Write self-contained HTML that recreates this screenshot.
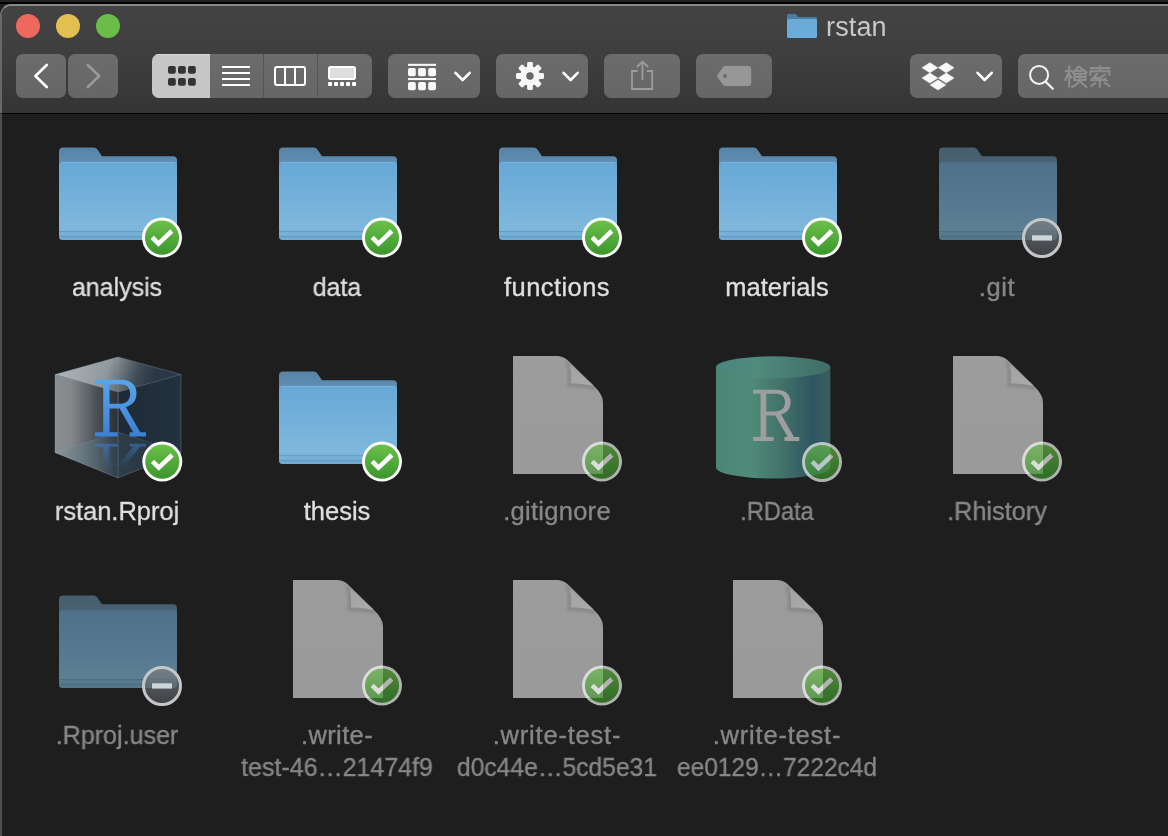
<!DOCTYPE html>
<html><head><meta charset="utf-8">
<style>
html,body{margin:0;padding:0;width:1168px;height:836px;overflow:hidden;background:#1e1e1e;font-family:"Liberation Sans",sans-serif;}
.abs{position:absolute;}
#topdark{left:0;top:0;width:1168px;height:2px;background:#232323;}
#topblack{left:0;top:2px;width:1168px;height:2px;background:#000;}
#win{left:0;top:4px;width:1180px;height:900px;border-top:2px solid #878787;border-left:2px solid #686868;border-top-left-radius:11px;overflow:hidden;background:#1e1e1e;}
#toolbar{left:0;top:0;width:1180px;height:107px;background:linear-gradient(#434343,#3e3e3e 50%,#343434);}
#tbhl{display:none;}
#tbline{left:0;top:107px;width:1180px;height:1px;background:#000;}
#lborder{left:0;top:114px;width:2px;height:722px;background:#4e4e4e;}
.light{width:24px;height:24px;border-radius:50%;top:8px;}
.btn{background:linear-gradient(#6c6c6c,#666666);border-radius:7px;height:44px;top:50px;}
.lbl{position:absolute;will-change:transform;-webkit-text-stroke:0.35px currentColor;width:220px;text-align:center;font-size:25.5px;line-height:32px;color:#dfdfdf;white-space:nowrap;}
.dim{color:#878787;}
</style></head><body>
<div class="abs" id="topdark"></div>
<div class="abs" id="topblack"></div>
<div class="abs" id="win">
  <div class="abs" id="toolbar"></div>
  <div class="abs" id="tbhl"></div>
  <div class="abs" id="tbline"></div>
  <div class="abs light" style="left:14px;background:#ee685d;"></div>
  <div class="abs light" style="left:54px;background:#e2bf4e;"></div>
  <div class="abs light" style="left:94px;background:#69bd48;"></div>
</div>

<div class="abs" id="lborder"></div>
<div class="abs" style="left:0;top:113px;width:2px;height:1px;background:#2a2a2a;"></div>
<!-- toolbar buttons (absolute page coords) -->
<div class="abs btn" style="left:16px;top:54px;width:50px;"></div>
<div class="abs btn" style="left:68px;top:54px;width:50px;"></div>
<svg class="abs" style="left:0;top:0" width="1168" height="120">
  <path d="M46.8 65 L35.4 76 L46.8 87" fill="none" stroke="#fff" stroke-width="2.6" stroke-linecap="round" stroke-linejoin="round"/>
  <path d="M87.8 65 L99.2 76 L87.8 87" fill="none" stroke="#9a9a9a" stroke-width="2.6" stroke-linecap="round" stroke-linejoin="round"/>
</svg>

<!-- segmented view control -->
<div class="abs" style="left:152px;top:54px;width:220px;height:44px;border-radius:7px;overflow:hidden;background:linear-gradient(#6c6c6c,#666);">
  <div class="abs" style="left:0;top:0;width:58px;height:44px;background:#c6c6c6;border-top:1px solid #d8d8d8;box-sizing:border-box;"></div>
  <div class="abs" style="left:111px;top:0;width:1px;height:44px;background:#555;"></div>
  <div class="abs" style="left:165px;top:0;width:1px;height:44px;background:#555;"></div>
</div>
<svg class="abs" style="left:0;top:0" width="1168" height="120">
  <!-- icon grid -->
  <g fill="#333">
    <rect x="168" y="66.1" width="7.8" height="7.7" rx="2"/><rect x="178" y="66.1" width="7.8" height="7.7" rx="2"/><rect x="188" y="66.1" width="7.8" height="7.7" rx="2"/>
    <rect x="168" y="78.1" width="7.8" height="7.7" rx="2"/><rect x="178" y="78.1" width="7.8" height="7.7" rx="2"/><rect x="188" y="78.1" width="7.8" height="7.7" rx="2"/>
  </g>
  <!-- list -->
  <g fill="#fff">
    <rect x="222" y="66" width="28" height="2"/><rect x="222" y="72" width="28" height="2"/><rect x="222" y="78" width="28" height="2"/><rect x="222" y="84" width="28" height="2"/>
  </g>
  <!-- columns -->
  <rect x="275" y="67" width="30" height="18" rx="2" fill="none" stroke="#fff" stroke-width="2"/>
  <rect x="284" y="67" width="2" height="18" fill="#fff"/><rect x="294" y="67" width="2" height="18" fill="#fff"/>
  <!-- gallery -->
  <rect x="329" y="67" width="26" height="12" rx="1.8" fill="#dedede" stroke="#fff" stroke-width="2"/>
  <g fill="#fff"><rect x="328.1" y="82" width="3.9" height="4" rx="0.8"/><rect x="334.1" y="82" width="3.9" height="4" rx="0.8"/><rect x="340.1" y="82" width="3.9" height="4" rx="0.8"/><rect x="346.1" y="82" width="3.9" height="4" rx="0.8"/><rect x="352.1" y="82" width="3.9" height="4" rx="0.8"/></g>
</svg>

<!-- group, action, share, tag, dropbox buttons -->
<div class="abs btn" style="left:388px;top:54px;width:92px;"></div>
<div class="abs btn" style="left:496px;top:54px;width:92px;"></div>
<div class="abs btn" style="left:604px;top:54px;width:76px;"></div>
<div class="abs btn" style="left:696px;top:54px;width:76px;"></div>
<div class="abs btn" style="left:910px;top:54px;width:92px;"></div>
<div class="abs btn" style="left:1018px;top:54px;width:170px;"></div>

<svg class="abs" style="left:0;top:0" width="1168" height="120">
  <!-- group icon -->
  <g fill="#f8f8f8">
    <rect x="408" y="63.8" width="28" height="2.1"/>
    <rect x="408" y="68" width="7.8" height="8.2" rx="1.8"/><rect x="418.1" y="68" width="7.8" height="8.2" rx="1.8"/><rect x="428.2" y="68" width="7.8" height="8.2" rx="1.8"/>
    <rect x="408" y="78" width="28" height="2.1"/>
    <rect x="408" y="82" width="7.8" height="8.2" rx="1.8"/><rect x="418.1" y="82" width="7.8" height="8.2" rx="1.8"/><rect x="428.2" y="82" width="7.8" height="8.2" rx="1.8"/>
  </g>
  <path d="M455.5 72.8 L462.6 80 L469.7 72.8" fill="none" stroke="#fff" stroke-width="2.6" stroke-linecap="round" stroke-linejoin="round"/>
  <!-- gear -->
  <g transform="translate(530 76)" fill="#f6f6f6">
    <g id="teeth">
      <rect x="-2.9" y="-14" width="5.8" height="28" rx="1.4"/>
      <rect x="-2.9" y="-14" width="5.8" height="28" rx="1.4" transform="rotate(45)"/>
      <rect x="-2.9" y="-14" width="5.8" height="28" rx="1.4" transform="rotate(90)"/>
      <rect x="-2.9" y="-14" width="5.8" height="28" rx="1.4" transform="rotate(135)"/>
    </g>
    <circle r="9.8"/>
    <circle r="3.7" fill="#686868"/>
  </g>
  <path d="M563.5 72.8 L570.6 80 L577.7 72.8" fill="none" stroke="#fff" stroke-width="2.6" stroke-linecap="round" stroke-linejoin="round"/>
  <!-- share -->
  <g fill="none" stroke="#9c9c9c" stroke-width="1.8">
    <path d="M637.8 71 L632 71 L632 89 L652.2 89 L652.2 71 L646.8 71"/>
    <path d="M642.5 61.5 L642.5 80"/>
    <path d="M637 67 L642.5 61.5 L648 67"/>
  </g>
  <!-- tag -->
  <path d="M724 66 L748 66 Q751.2 66 751.2 69.2 L751.2 82.8 Q751.2 86 748 86 L724 86 L717.5 77.2 Q716.7 76 717.5 74.8 Z" fill="#979797"/>
  <circle cx="725" cy="76" r="2" fill="#6a6a6a"/>
  <!-- dropbox -->
  <g fill="#f8f8f8" stroke="#f8f8f8" stroke-width="0.6" stroke-linejoin="round"><path d="M929.9 62.7 L937.7 67.7 L929.9 72.7 L922.1 67.7 Z"/><path d="M946.2 62.7 L954.0 67.7 L946.2 72.7 L938.4 67.7 Z"/><path d="M929.9 73.1 L937.7 78.1 L929.9 83.1 L922.1 78.1 Z"/><path d="M946.2 73.1 L954.0 78.1 L946.2 83.1 L938.4 78.1 Z"/><path d="M938.0 80.0 L945.8 85.0 L938.0 90.0 L930.2 85.0 Z"/></g>
  <path d="M977.5 72.8 L984.6 80 L991.7 72.8" fill="none" stroke="#fff" stroke-width="2.6" stroke-linecap="round" stroke-linejoin="round"/>
  <!-- kensaku -->
  <g transform="translate(1060 60) scale(0.04708)" fill="none" stroke="#8e8e8e" stroke-width="44" stroke-linecap="butt" stroke-linejoin="miter">
    <path d="M105 235 L275 235 M195 115 L195 590 M190 255 L105 440 M205 310 L255 385"/>
    <path d="M400 135 L262 292 M400 135 L578 278 M335 232 L478 232"/>
    <path d="M305 292 L540 292 L540 425 L305 425 Z M422 292 L422 430 M305 358 L540 358"/>
    <path d="M422 430 Q360 530 240 578 M430 450 Q500 540 578 580"/>
    <path d="M845 115 L845 232 M635 172 L1072 172 M645 335 L645 240 L1048 240 L1048 335"/>
    <path d="M800 280 L705 380 L905 372 M965 300 L748 440 M640 430 L1000 420 M940 380 L1010 455"/>
    <path d="M845 430 L845 592 M765 480 L650 560 M930 475 L1062 560"/>
  </g>
  <!-- search -->
  <circle cx="1039.1" cy="74.9" r="9" fill="none" stroke="#f4f4f4" stroke-width="2"/>
  <path d="M1045.6 81.6 L1052.8 88.8" stroke="#f4f4f4" stroke-width="2.2" stroke-linecap="round"/>
</svg>

<!-- title -->
<svg class="abs" style="left:786px;top:13px" width="32" height="27" viewBox="0 0 32 27">
  <path d="M1 2.6 Q1 1 2.6 1 L8.5 1 Q9.8 1 10.6 2 L12.4 4.1 L29.6 4.1 Q31 4.1 31 5.5 L31 9 L1 9 Z" fill="#4a7ea3"/>
  <rect x="1" y="5.9" width="30" height="19.2" rx="1.6" fill="#6aabd9"/>
</svg>
<div class="abs" style="left:826px;top:10px;font-size:27px;line-height:34px;letter-spacing:0.15px;color:#c8c8c8;will-change:transform;">rstan</div>

<svg class="abs" style="left:0;top:0" width="1168" height="836">
<defs>
  <linearGradient id="fbk" x1="0" y1="0" x2="0" y2="1"><stop offset="0" stop-color="#5683a6"/><stop offset="1" stop-color="#6595bb"/></linearGradient>
  <linearGradient id="ffr" x1="0" y1="0" x2="0" y2="1"><stop offset="0" stop-color="#67a8d8"/><stop offset="0.55" stop-color="#76b2da"/><stop offset="0.85" stop-color="#7fb8dc"/><stop offset="1" stop-color="#6ea9d2"/></linearGradient>
  <linearGradient id="dbk" x1="0" y1="0" x2="0" y2="1"><stop offset="0" stop-color="#455d6e"/><stop offset="1" stop-color="#4a6476"/></linearGradient>
  <linearGradient id="dfr" x1="0" y1="0" x2="0" y2="1"><stop offset="0" stop-color="#4e7189"/><stop offset="0.55" stop-color="#56798f"/><stop offset="0.85" stop-color="#5c7f94"/><stop offset="1" stop-color="#54758a"/></linearGradient>
  <linearGradient id="grn" x1="0" y1="0" x2="0" y2="1"><stop offset="0" stop-color="#6cc04a"/><stop offset="1" stop-color="#3b962c"/></linearGradient>
  <linearGradient id="mgr" x1="0" y1="0" x2="0" y2="1"><stop offset="0" stop-color="#7a8288"/><stop offset="1" stop-color="#4c5055"/></linearGradient>
  <linearGradient id="docg" x1="0" y1="0" x2="0" y2="1"><stop offset="0" stop-color="#9c9c9c"/><stop offset="1" stop-color="#9a9a9a"/></linearGradient>
  <linearGradient id="foldg" x1="0" y1="0" x2="1" y2="1"><stop offset="0" stop-color="#a2a2a2"/><stop offset="1" stop-color="#ababab"/></linearGradient>
  <linearGradient id="cl" x1="55" y1="0" x2="118" y2="0" gradientUnits="userSpaceOnUse"><stop offset="0" stop-color="#8a8e91"/><stop offset="0.25" stop-color="#85898c"/><stop offset="0.65" stop-color="#4c5156"/><stop offset="1" stop-color="#2a3035"/></linearGradient>
  <linearGradient id="ct" x1="70" y1="362" x2="150" y2="390" gradientUnits="userSpaceOnUse"><stop offset="0" stop-color="#a9b0b3"/><stop offset="0.45" stop-color="#8f989c"/><stop offset="0.8" stop-color="#3f4b55"/><stop offset="1" stop-color="#2a3744"/></linearGradient>
  <linearGradient id="cr" x1="118" y1="0" x2="181" y2="0" gradientUnits="userSpaceOnUse"><stop offset="0" stop-color="#1f2a35"/><stop offset="1" stop-color="#233140"/></linearGradient>
  <linearGradient id="cf" x1="55" y1="0" x2="181" y2="0" gradientUnits="userSpaceOnUse"><stop offset="0" stop-color="#8c989d"/><stop offset="0.25" stop-color="#63717a"/><stop offset="0.5" stop-color="#2f3d48"/><stop offset="1" stop-color="#23313c"/></linearGradient>
  <linearGradient id="rb" x1="0" y1="0" x2="0" y2="1"><stop offset="0" stop-color="#58a6ea"/><stop offset="1" stop-color="#3b80d6"/></linearGradient>
  <linearGradient id="rfade" x1="0" y1="440" x2="0" y2="468" gradientUnits="userSpaceOnUse"><stop offset="0" stop-color="#fff" stop-opacity="0.6"/><stop offset="1" stop-color="#fff" stop-opacity="0"/></linearGradient>
  <mask id="rmask"><rect x="80" y="437" width="80" height="40" fill="url(#rfade)"/></mask>
  <linearGradient id="cyb" x1="716" y1="0" x2="830.3" y2="0" gradientUnits="userSpaceOnUse"><stop offset="0" stop-color="#4b8674"/><stop offset="0.3" stop-color="#4f8b78"/><stop offset="0.55" stop-color="#44746a"/><stop offset="0.85" stop-color="#2f5660"/><stop offset="1" stop-color="#375f63"/></linearGradient>
  <linearGradient id="cyt" x1="716" y1="0" x2="830.3" y2="0" gradientUnits="userSpaceOnUse"><stop offset="0" stop-color="#4a8580"/><stop offset="0.35" stop-color="#508b7c"/><stop offset="1" stop-color="#3f6c66"/></linearGradient>
  <path id="Rg" fill-rule="evenodd" d="M0 0 L26 0 C36 0 41.5 5.6 41.5 13.8 C41.5 20.8 37.5 25.6 30.8 27.2 L45.2 52.4 L51 52.4 L51 56.8 L34.6 56.8 L34.6 52.4 L38.2 52.4 L24.6 28.6 L14.5 28.6 L14.5 52.4 L22.7 52.4 L22.7 56.8 L0 56.8 L0 52.4 L8.2 52.4 L8.2 4.5 L0 4.5 Z M14.5 4.5 L25.5 4.5 C31.8 4.5 35.2 8.2 35.2 14 C35.2 19.8 31.8 24 25.5 24 L14.5 24 Z"/>
  <g id="folder">
    <path d="M0 4 Q0 0 4 0 L34.5 0 Q37 0 38.6 2.2 L43 8.6 L114 8.6 Q118 8.6 118 12.6 L118 24 L0 24 Z" fill="url(#fbk)"/>
    <rect x="0" y="14.3" width="118" height="78.2" rx="3.5" fill="url(#ffr)"/>
    <rect x="2" y="14.3" width="114" height="1" fill="#8cc4ea" opacity="0.5"/>
    <rect x="0" y="83.4" width="118" height="1.2" fill="#5f97c2" opacity="0.8"/>
    <rect x="0" y="88.3" width="118" height="1.2" fill="#5f97c2" opacity="0.8"/>
  </g>
  <g id="dfolder">
    <path d="M0 4 Q0 0 4 0 L34.5 0 Q37 0 38.6 2.2 L43 8.6 L114 8.6 Q118 8.6 118 12.6 L118 24 L0 24 Z" fill="url(#dbk)"/>
    <rect x="0" y="14.3" width="118" height="78.2" rx="3.5" fill="url(#dfr)"/>
    <rect x="0" y="83.4" width="118" height="1.2" fill="#4a6a80" opacity="0.8"/>
    <rect x="0" y="88.3" width="118" height="1.2" fill="#4a6a80" opacity="0.8"/>
  </g>
  <g id="check">
    <circle r="20" fill="#fff"/>
    <circle r="17.1" fill="url(#grn)"/>
    <path d="M-9.8 -0.3 L-3.5 6.1 L9.8 -6.6" fill="none" stroke="#fff" stroke-width="4.5" stroke-linecap="butt" stroke-linejoin="miter"/>
  </g>
  <g id="minus">
    <circle r="18.5" fill="url(#mgr)" opacity="0.72"/>
    <circle r="18.5" fill="none" stroke="#c6c6c6" stroke-width="3"/>
    <rect x="-10" y="-2.7" width="20" height="5.3" fill="#ccd5da"/>
  </g>
  <filter id="fblur" x="-50%" y="-50%" width="200%" height="200%"><feGaussianBlur stdDeviation="1.6"/></filter>
  <clipPath id="docclip"><path d="M0 0 L43.5 0 Q50.5 0 55.5 5 L80 29 Q90 38.5 90 46 L90 118 L0 118 Z"/></clipPath>
  <g id="doc">
    <path d="M0 0 L43.5 0 Q50.5 0 55.5 5 L80 29 Q90 38.5 90 46 L90 118 L0 118 Z" fill="url(#docg)"/>
    <path d="M54 6 Q58 13 56.5 29 Q70 28.6 82 32" fill="none" stroke="#000" stroke-opacity="0.13" stroke-width="4" filter="url(#fblur)" clip-path="url(#docclip)"/>
    <path d="M56.4 8.4 Q58.6 13 58 27.2 Q70 27.4 79 29.6 L80 29 Z" fill="url(#foldg)"/>
  </g>
</defs>
<!-- row 1 -->
<use href="#folder" x="59" y="147.6"/><use href="#check" x="162" y="237.6"/>
<use href="#folder" x="279" y="147.6"/><use href="#check" x="382" y="237.6"/>
<use href="#folder" x="499" y="147.6"/><use href="#check" x="602" y="237.6"/>
<use href="#folder" x="719" y="147.6"/><use href="#check" x="822" y="237.6"/>
<use href="#dfolder" x="939" y="147.6"/><use href="#minus" x="1042" y="238"/>
<!-- row 2 -->
<use href="#folder" x="279" y="371.6"/><use href="#check" x="382" y="461.6"/>
<use href="#doc" x="513" y="356"/><g opacity="0.66"><use href="#check" x="602" y="461.6"/></g>
<use href="#doc" x="953" y="356"/><g opacity="0.66"><use href="#check" x="1042" y="461.6"/></g>
<!-- R cube -->
<polygon points="55,374.5 118,392 118,478 55,452.6" fill="url(#cl)"/>
<polygon points="118,392 181,374.5 181,452.6 118,478" fill="url(#cr)"/>
<polygon points="118,357 181,374.5 118,392 55,374.5" fill="url(#ct)"/>
<polygon points="55,452.6 118,432 181,452.6 118,478" fill="url(#cf)"/>
<g fill="none" stroke="#8fb0c6" stroke-opacity="0.3" stroke-width="1">
  <path d="M118 357 L181 374.5 L181 452.6 L118 478 L55 452.6 L55 374.5 Z"/>
  <path d="M55 374.5 L118 392 L181 374.5 M118 392 L118 478"/>
  <path d="M55 452.6 L118 432 L181 452.6 M118 357 L118 432" stroke-opacity="0.18"/>
</g>
<use href="#Rg" transform="translate(95 379.8)" fill="url(#rb)"/>
<g mask="url(#rmask)"><use href="#Rg" transform="translate(95 483.5) scale(1 -0.7)" fill="#3d82d6"/></g>
<g opacity="1"><use href="#check" x="162.3" y="461.6"/></g>
<!-- RData cylinder -->
<path d="M716 367.3 L830.3 367.3 L830.3 467.5 A57.15 11 0 0 1 716 467.5 Z" fill="url(#cyb)"/>
<ellipse cx="773.15" cy="367.3" rx="57.15" ry="11" fill="url(#cyt)"/>
<use href="#Rg" transform="translate(753.1 389.7) scale(0.905 0.904)" fill="#9e9e9e"/>
<g opacity="0.66"><use href="#check" x="822" y="462"/></g>
<!-- row 3 -->
<use href="#dfolder" x="59" y="595.6"/><use href="#minus" x="162" y="686"/>
<use href="#doc" x="293" y="580"/><g opacity="0.66"><use href="#check" x="382" y="685.6"/></g>
<use href="#doc" x="513" y="580"/><g opacity="0.66"><use href="#check" x="602" y="685.6"/></g>
<use href="#doc" x="733" y="580"/><g opacity="0.66"><use href="#check" x="822" y="685.6"/></g>
</svg>
<div class="lbl" style="left:6.8px;top:271px;transform:scaleX(0.979);">analysis</div>
<div class="lbl" style="left:226.8px;top:271px;transform:scaleX(0.980);">data</div>
<div class="lbl" style="left:447.0px;top:271px;letter-spacing:0.44px;">functions</div>
<div class="lbl" style="left:666.8px;top:271px;letter-spacing:0.01px;">materials</div>
<div class="lbl dim" style="left:887.1px;top:271px;letter-spacing:0.60px;">.git</div>
<div class="lbl" style="left:6.8px;top:495px;transform:scaleX(0.997);">rstan.Rproj</div>
<div class="lbl" style="left:226.8px;top:495px;letter-spacing:0.02px;">thesis</div>
<div class="lbl dim" style="left:446.9px;top:495px;letter-spacing:0.28px;">.gitignore</div>
<div class="lbl dim" style="left:666.8px;top:495px;transform:scaleX(0.926);">.RData</div>
<div class="lbl dim" style="left:886.8px;top:495px;transform:scaleX(0.993);">.Rhistory</div>
<div class="lbl dim" style="left:6.8px;top:719px;transform:scaleX(0.984);">.Rproj.user</div>
<div class="lbl dim" style="left:227.0px;top:719px;letter-spacing:0.38px;">.write-</div>
<div class="lbl dim" style="left:226.8px;top:751px;transform:scaleX(0.981);">test-46…21474f9</div>
<div class="lbl dim" style="left:447.2px;top:719px;letter-spacing:0.79px;">.write-test-</div>
<div class="lbl dim" style="left:446.8px;top:751px;transform:scaleX(0.967);">d0c44e…5cd5e31</div>
<div class="lbl dim" style="left:667.2px;top:719px;letter-spacing:0.79px;">.write-test-</div>
<div class="lbl dim" style="left:666.8px;top:751px;transform:scaleX(0.960);">ee0129…7222c4d</div>
</body></html>
